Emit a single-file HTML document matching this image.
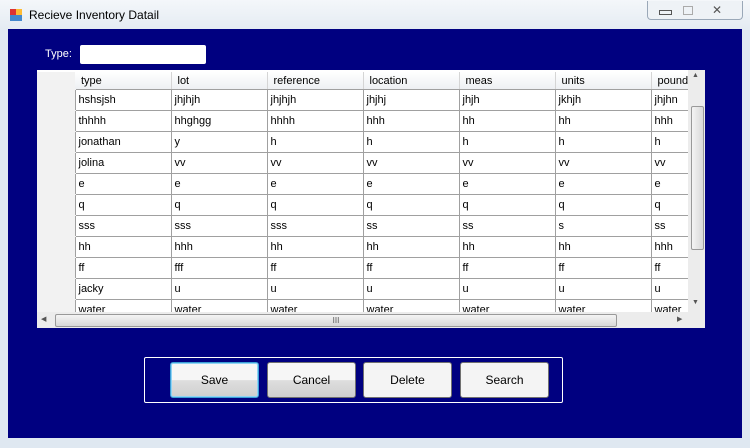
<!DOCTYPE html><html><head><style>
body{margin:0;width:750px;height:448px;background:#dfe8f1;font-family:"Liberation Sans",sans-serif;font-size:11px;position:relative;overflow:hidden}
.a{position:absolute}
.title{left:0;top:0;width:750px;height:30px;background:linear-gradient(#f4f7fa,#e4ebf2)}
.client{left:8px;top:29px;width:734px;height:409px;background:#000080}
.grid{left:37px;top:70px;width:668px;height:258px;background:#fff;overflow:hidden}
table{border-collapse:collapse;position:absolute;left:0;top:2px;table-layout:fixed;width:710px}
td{height:20px;border:1px solid #a0a0a0;padding:0 0 0 3px;font-size:11px;white-space:nowrap;overflow:hidden;color:#000}
th{height:17px;font-weight:normal;text-align:left;padding:0 0 0 6px;background:linear-gradient(#fff,#eef0f3);border-right:1px solid #d5d5d5;border-bottom:1px solid #a0a0a0;font-size:11px;overflow:hidden;white-space:nowrap}
td.rh,th.rh{background:#f2f2f2;border:none;border-bottom:1px solid #f2f2f2;padding:0}
.btn{width:87px;height:34px;border:1px solid #707070;border-radius:3px;background:linear-gradient(#f6f6f6 50%,#dedede 51%,#cfcfcf);font-size:12px;text-align:center;line-height:34px;top:362px}
</style></head><body>
<div class="a title"></div>
<div class="a" style="left:10px;top:9px;width:6px;height:6px;background:#d33"></div><div class="a" style="left:16px;top:9px;width:6px;height:6px;background:#fb3"></div><div class="a" style="left:10px;top:15px;width:12px;height:6px;background:#48c"></div>
<div class="a" style="left:29px;top:8px;font-size:12px">Recieve Inventory Datail</div>
<div class="a" style="left:647px;top:1px;width:94px;height:18px;border:1px solid #9aa8b8;border-top:none;border-radius:0 0 4px 4px;background:#eef2f6"></div>
<div class="a" style="left:659px;top:10px;width:11px;height:3px;border:1px solid #555"></div>
<div class="a" style="left:683px;top:6px;width:8px;height:7px;border:1px solid #aaa"></div>
<div class="a" style="left:712px;top:3px;font-size:12px;color:#555">✕</div>
<div class="a client"></div>
<div class="a" style="left:45px;top:48px;color:#fff;font-size:11px">Type:</div>
<div class="a" style="left:80px;top:45px;width:126px;height:19px;background:#fff;border-radius:2px"></div>
<div class="a grid">
<table>
<colgroup><col style="width:38px"><col style="width:96px"><col style="width:96px"><col style="width:96px"><col style="width:96px"><col style="width:96px"><col style="width:96px"><col style="width:96px"></colgroup>
<tr><th class="rh"></th><th>type</th><th>lot</th><th>reference</th><th>location</th><th>meas</th><th>units</th><th>pounds</th></tr>
<tr><td class="rh"></td><td>hshsjsh</td><td>jhjhjh</td><td>jhjhjh</td><td>jhjhj</td><td>jhjh</td><td>jkhjh</td><td>jhjhn</td></tr>
<tr><td class="rh"></td><td>thhhh</td><td>hhghgg</td><td>hhhh</td><td>hhh</td><td>hh</td><td>hh</td><td>hhh</td></tr>
<tr><td class="rh"></td><td>jonathan</td><td>y</td><td>h</td><td>h</td><td>h</td><td>h</td><td>h</td></tr>
<tr><td class="rh"></td><td>jolina</td><td>vv</td><td>vv</td><td>vv</td><td>vv</td><td>vv</td><td>vv</td></tr>
<tr><td class="rh"></td><td>e</td><td>e</td><td>e</td><td>e</td><td>e</td><td>e</td><td>e</td></tr>
<tr><td class="rh"></td><td>q</td><td>q</td><td>q</td><td>q</td><td>q</td><td>q</td><td>q</td></tr>
<tr><td class="rh"></td><td>sss</td><td>sss</td><td>sss</td><td>ss</td><td>ss</td><td>s</td><td>ss</td></tr>
<tr><td class="rh"></td><td>hh</td><td>hhh</td><td>hh</td><td>hh</td><td>hh</td><td>hh</td><td>hhh</td></tr>
<tr><td class="rh"></td><td>ff</td><td>fff</td><td>ff</td><td>ff</td><td>ff</td><td>ff</td><td>ff</td></tr>
<tr><td class="rh"></td><td>jacky</td><td>u</td><td>u</td><td>u</td><td>u</td><td>u</td><td>u</td></tr>
<tr><td class="rh"></td><td>water</td><td>water</td><td>water</td><td>water</td><td>water</td><td>water</td><td>water</td></tr>
</table>
<div class="a" style="left:651px;top:0;width:17px;height:242px;background:#ececec"></div>
<div class="a" style="left:654px;top:36px;width:11px;height:142px;background:linear-gradient(90deg,#f4f4f4,#d8d8d8);border:1px solid #999;border-radius:2px"></div>
<div class="a" style="left:655px;top:2px;font-size:7px;color:#555">▲</div>
<div class="a" style="left:655px;top:229px;font-size:7px;color:#555">▼</div>
<div class="a" style="left:0;top:242px;width:668px;height:16px;background:#ececec"></div>
<div class="a" style="left:18px;top:244px;width:560px;height:11px;background:linear-gradient(#f4f4f4,#d8d8d8);border:1px solid #999;border-radius:2px;text-align:center;font-size:8px;line-height:11px;color:#555">III</div>
<div class="a" style="left:4px;top:245px;font-size:7px;color:#555">◀</div>
<div class="a" style="left:640px;top:245px;font-size:7px;color:#555">▶</div>
</div>
<div class="a" style="left:144px;top:357px;width:417px;height:44px;border:1px solid #fff;border-radius:2px"></div>
<div class="a btn" style="left:170px;border-color:#3c9fd6;box-shadow:inset 0 0 0 1px #8fd3f5">Save</div>
<div class="a btn" style="left:267px">Cancel</div>
<div class="a btn" style="left:363px;background:#f4f4f4">Delete</div>
<div class="a btn" style="left:460px;background:#f4f4f4">Search</div>
</body></html>
